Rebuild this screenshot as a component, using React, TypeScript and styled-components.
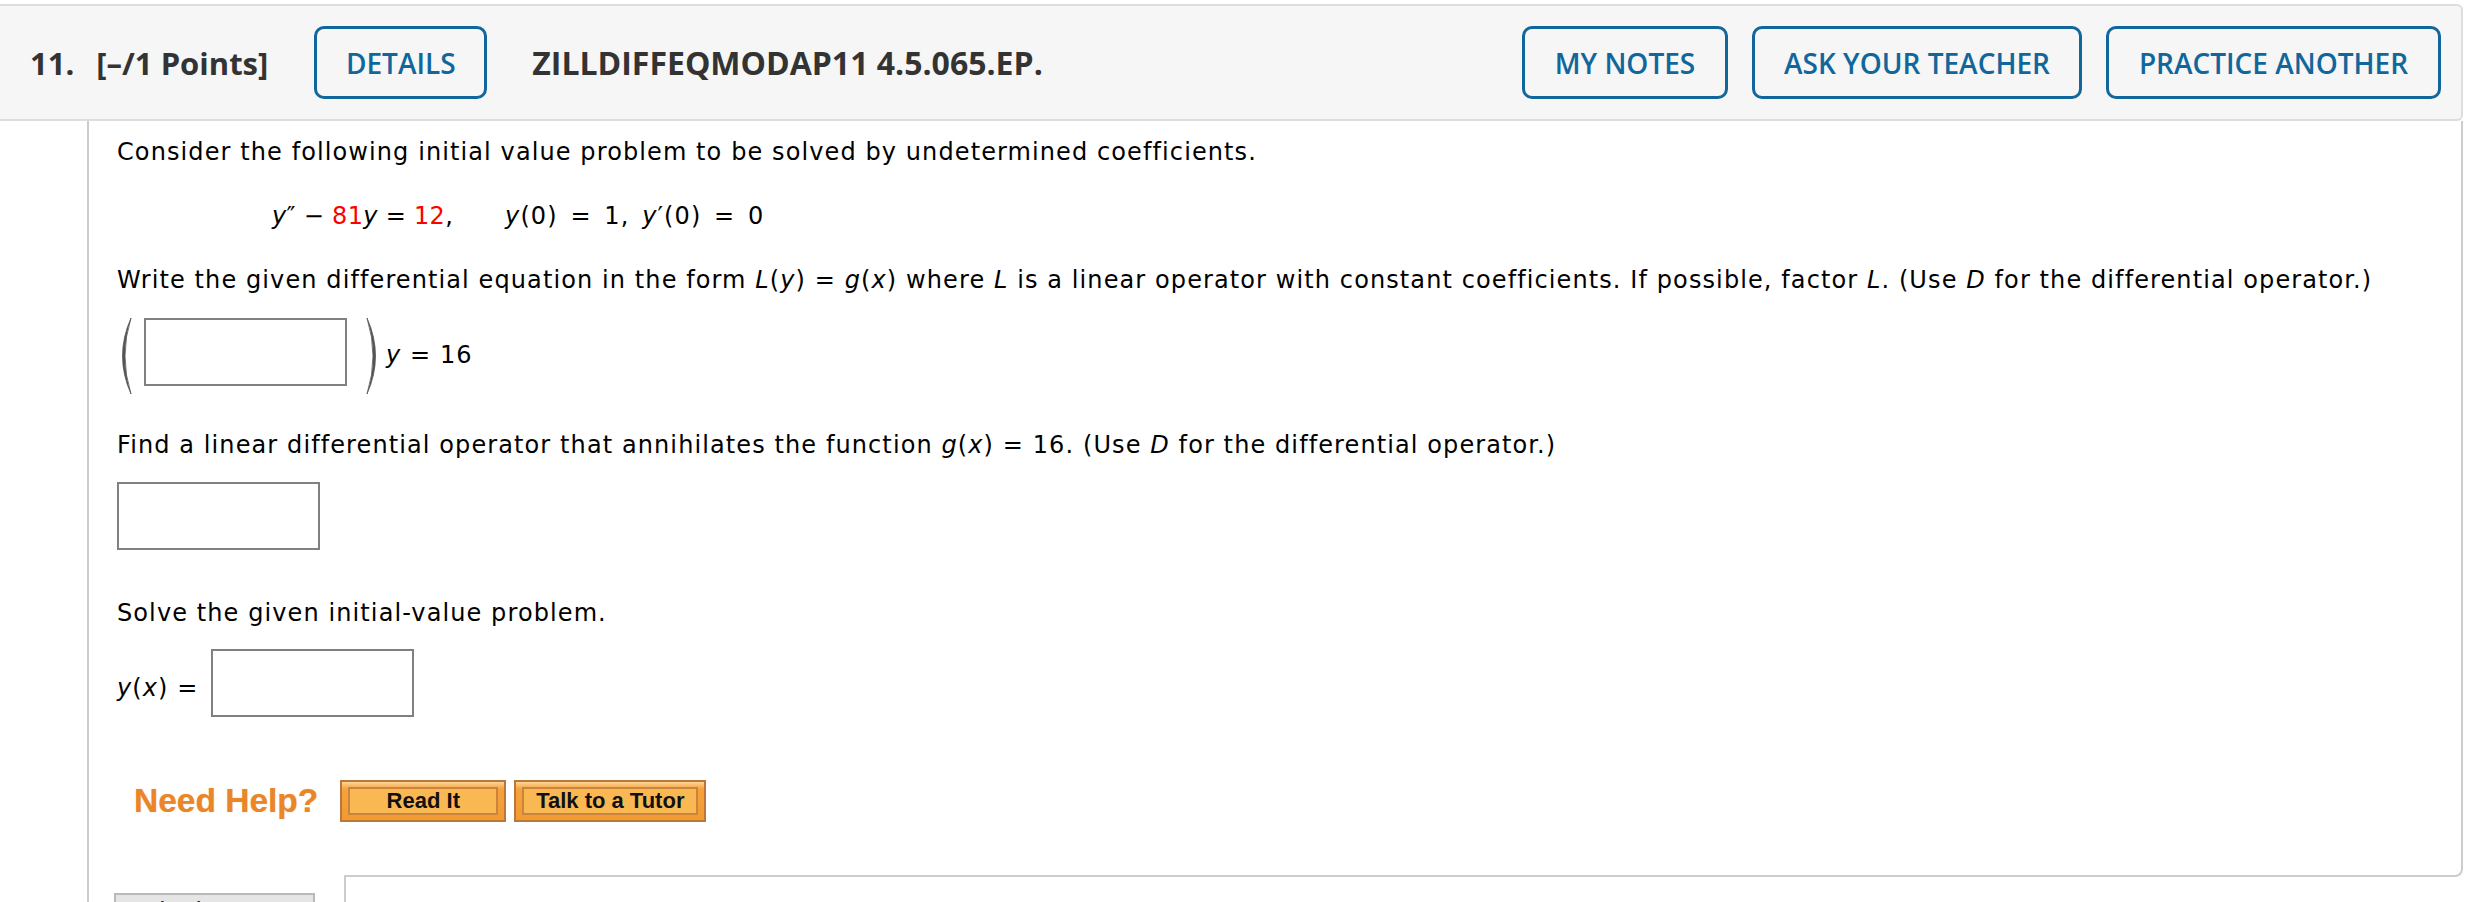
import styled, { createGlobalStyle } from 'styled-components';

const GlobalStyle = createGlobalStyle`
  html, body {
    margin: 0;
    padding: 0;
    background: #fff;
    overflow: hidden;
  }
`;

const Page = styled.div`
  padding-top: 4px;
`;

const Header = styled.header`
  display: flex;
  align-items: center;
  height: 117px;
  box-sizing: border-box;
  margin-right: 3px;
  padding: 0 20px 0 30px;
  background: #f6f6f6;
  border: 2px solid #dddddd;
  border-left: none;
  border-radius: 0 6px 6px 0;
  font-family: 'Open Sans', sans-serif;
  color: #333;
`;

const Number = styled.span`
  font-size: 31px;
  font-weight: 700;
  margin-right: 22px;
`;

const Points = styled.span`
  font-size: 31px;
  font-weight: 700;
  margin-right: 46px;
`;

const Title = styled.h2`
  margin: 0 0 0 45px;
  font-size: 32px;
  font-weight: 700;
  flex: 1;
`;

const Actions = styled.div`
  display: flex;
  gap: 24px;
`;

const OutlineButton = styled.button<{ $width: number }>`
  width: ${(p) => p.$width}px;
  height: 73px;
  padding: 0;
  border: 3px solid #11669b;
  border-radius: 10px;
  background: transparent;
  color: #11669b;
  font-family: 'Open Sans', sans-serif;
  font-size: 28px;
  font-weight: 600;
  white-space: nowrap;
  cursor: pointer;
`;

const Question = styled.section`
  position: relative;
  margin: 0 3px 0 87px;
  border-left: 2px solid #cccccc;
  padding: 15px 30px 55px 28px;
  font-family: 'DejaVu Sans', Verdana, sans-serif;
  font-size: 24px;
  line-height: 32px;
  letter-spacing: 1.1px;
  color: #000;

  &::after {
    content: '';
    position: absolute;
    top: 0;
    bottom: 0;
    left: 255px;
    right: 0;
    border-right: 2px solid #cccccc;
    border-bottom: 2px solid #cccccc;
    border-bottom-right-radius: 8px;
    pointer-events: none;
  }
`;

const Text = styled.p<{ $top?: number }>`
  margin: ${(p) => p.$top ?? 0}px 0 0;
`;

const Equation = styled.p`
  margin: 32px 0 0;
  padding-left: 155px;
  letter-spacing: 0.3px;
`;

const Conditions = styled.span`
  letter-spacing: 1.1px;
  word-spacing: 4px;
`;

const Var = styled.i`
  font-style: italic;
`;

const Red = styled.span`
  color: #ff0000;
`;

const Gap = styled.span`
  display: inline-block;
  width: 52px;
`;

const ParenRow = styled.div`
  display: flex;
  align-items: flex-start;
  margin: 21px 0 0 -3px;
  height: 76px;
`;

const Paren = styled.svg<{ $gap: number }>`
  flex: none;
  display: block;
  margin-left: ${(p) => p.$gap}px;
`;

const AnswerBox = styled.input<{ $top?: number; $left?: number }>`
  display: block;
  flex: none;
  width: 203px;
  height: 68px;
  margin: ${(p) => p.$top ?? 0}px 0 0 ${(p) => p.$left ?? 0}px;
  box-sizing: border-box;
  border: 2px solid #808080;
  border-radius: 0;
  background: #fff;
  font: inherit;
  padding: 0 8px;
`;

const ParenText = styled.span`
  margin-top: 22px;
  margin-left: 2px;
`;

const LabelRow = styled.div`
  display: flex;
  align-items: flex-start;
  margin-top: 20px;
`;

const Label = styled.span`
  margin-top: 23px;
  margin-right: 12px;
`;

const HelpRow = styled.div`
  display: flex;
  align-items: center;
  gap: 8px;
  margin: 63px 0 0 17px;
  height: 42px;
  letter-spacing: 0;
`;

const NeedHelp = styled.span`
  font-family: 'Liberation Sans', Arial, sans-serif;
  font-weight: 700;
  font-size: 33.5px;
  color: #ea862a;
  margin-right: 14px;
  text-shadow: 0 0 1px rgba(234, 134, 42, 0.6);
`;

const HelpButton = styled.button<{ $width: number }>`
  width: ${(p) => p.$width}px;
  height: 42px;
  padding: 5px 6px;
  box-sizing: border-box;
  border: 2px solid #b9773a;
  background: linear-gradient(#fcd597 0%, #f6a33d 18%, #f29a32 100%);
  cursor: pointer;

  span {
    display: flex;
    align-items: center;
    justify-content: center;
    height: 100%;
    box-sizing: border-box;
    border: 2px solid #c9843f;
    background: #fab853;
    font-family: 'Liberation Sans', Arial, sans-serif;
    font-weight: 700;
    font-size: 22px;
    color: #111;
  }
`;

const Footer = styled.div`
  display: flex;
  height: 60px;
  margin: 0 3px 0 87px;
  border-left: 2px solid #cccccc;
`;

const SubmitCell = styled.div`
  width: 255px;
  padding: 16px 0 0 25px;
  box-sizing: border-box;
`;

const SubmitButton = styled.button`
  display: flex;
  align-items: flex-start;
  justify-content: center;
  width: 201px;
  height: 40px;
  padding: 2px 0 0;
  box-sizing: border-box;
  border: 2px solid #b9b9b9;
  background: #e5e5e5;
  font-family: 'Liberation Sans', Arial, sans-serif;
  font-size: 26px;
  line-height: 28px;
  color: #222;
  white-space: nowrap;
`;

const SavedPanel = styled.div`
  flex: 1;
  border-left: 2px solid #cccccc;
`;

const LeftParen = ({ gap = 0 }: { gap?: number }) => (
  <Paren $gap={gap} width="20" height="78" viewBox="0 0 20 78">
    <path d="M17 1 Q0 39 17 77 Q5 39 17 1 Z" fill="#555" stroke="#555" strokeWidth="0.8" />
  </Paren>
);

const RightParen = ({ gap = 0 }: { gap?: number }) => (
  <Paren $gap={gap} width="20" height="78" viewBox="0 0 20 78">
    <path d="M3 1 Q20 39 3 77 Q15 39 3 1 Z" fill="#555" stroke="#555" strokeWidth="0.8" />
  </Paren>
);

const App = () => {
  return (
    <Page>
      <GlobalStyle />
      <Header>
        <Number>11.</Number>
        <Points>[–/1 Points]</Points>
        <OutlineButton $width={173}>DETAILS</OutlineButton>
        <Title>ZILLDIFFEQMODAP11 4.5.065.EP.</Title>
        <Actions>
          <OutlineButton $width={206}>MY NOTES</OutlineButton>
          <OutlineButton $width={330}>ASK YOUR TEACHER</OutlineButton>
          <OutlineButton $width={335}>PRACTICE ANOTHER</OutlineButton>
        </Actions>
      </Header>
      <Question>
        <Text>Consider the following initial value problem to be solved by undetermined coefficients.</Text>
        <Equation>
          <Var>y</Var>″ − <Red>81</Red>
          <Var>y</Var> = <Red>12</Red>,<Gap />
          <Conditions>
            <Var>y</Var>(0) = 1, <Var>y</Var>′(0) = 0
          </Conditions>
        </Equation>
        <Text $top={32}>
          Write the given differential equation in the form <Var>L</Var>(<Var>y</Var>) = <Var>g</Var>(
          <Var>x</Var>) where <Var>L</Var> is a linear operator with constant coefficients. If possible,
          factor <Var>L</Var>. (Use <Var>D</Var> for the differential operator.)
        </Text>
        <ParenRow>
          <LeftParen />
          <AnswerBox $top={1} $left={10} />
          <RightParen gap={17} />
          <ParenText>
            <Var>y</Var> = 16
          </ParenText>
        </ParenRow>
        <Text $top={36}>
          Find a linear differential operator that annihilates the function <Var>g</Var>(<Var>x</Var>) =
          16. (Use <Var>D</Var> for the differential operator.)
        </Text>
        <AnswerBox $top={21} />
        <Text $top={47}>Solve the given initial-value problem.</Text>
        <LabelRow>
          <Label>
            <Var>y</Var>(<Var>x</Var>) =
          </Label>
          <AnswerBox />
        </LabelRow>
        <HelpRow>
          <NeedHelp>Need Help?</NeedHelp>
          <HelpButton $width={166}>
            <span>Read It</span>
          </HelpButton>
          <HelpButton $width={192}>
            <span>Talk to a Tutor</span>
          </HelpButton>
        </HelpRow>
      </Question>
      <Footer>
        <SubmitCell>
          <SubmitButton>Submit Answer</SubmitButton>
        </SubmitCell>
        <SavedPanel />
      </Footer>
    </Page>
  );
};

export default App;
